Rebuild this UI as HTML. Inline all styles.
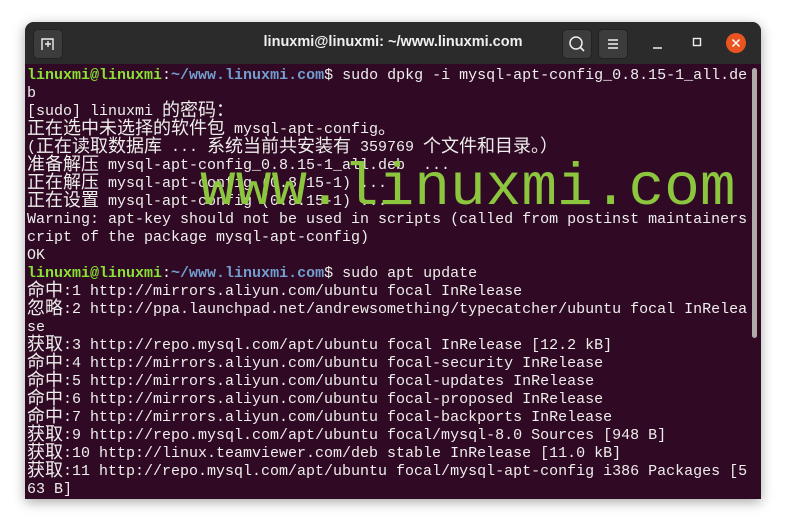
<!DOCTYPE html>
<html><head><meta charset="utf-8"><style>
html,body{margin:0;padding:0;background:#fff;width:786px;height:527px;overflow:hidden}
.win{position:absolute;left:25px;top:22px;width:736px;height:477px;border-radius:9px 9px 0 0;background:#300a24;overflow:hidden;box-shadow:0 3px 12px rgba(0,0,0,.35)}
.tb{position:absolute;left:0;top:0;width:736px;height:42px;background:#2b2b2b;color:#f0f0f0;font:bold 14.5px "Liberation Sans",sans-serif}
.btn{position:absolute;top:7px;width:28px;height:28px;border-radius:5px;background:#3c3c3c;border:1px solid #222}
.title{position:absolute;left:0;right:0;top:12px;text-align:center}
.term{position:absolute;left:2px;top:45px;font-family:"Liberation Mono","Noto Sans CJK SC",monospace;font-size:15px;line-height:18px;color:#eeeeec;white-space:pre}
.c{font-family:"Noto Sans CJK SC",sans-serif;font-size:18px;line-height:0;position:relative;top:1px}
.g{color:#8ae234;font-weight:bold}.b{color:#729fcf;font-weight:bold}
.wm{position:absolute;left:175px;top:132px;font-family:"Liberation Mono",monospace;font-size:59.5px;color:#8cc63f;white-space:pre}
.sb{position:absolute;left:727px;top:46px;width:5px;height:270px;border-radius:3px;background:#b0aaad}
</style></head><body>
<div class="win">
<div class="tb">
<div class="btn" style="left:8px"><svg width="28" height="28" viewBox="0 0 28 28"><path d="M8 20V9h11v11M14 11v6M11 14h6" stroke="#eee" stroke-width="1.4" fill="none"/></svg></div>
<div class="title">linuxmi@linuxmi: ~/www.linuxmi.com</div>
<div class="btn" style="left:537px"><svg width="28" height="28" viewBox="0 0 28 28"><circle cx="13" cy="13" r="6" stroke="#eee" stroke-width="1.5" fill="none"/><path d="M17.5 17.5L21 21" stroke="#eee" stroke-width="1.6"/></svg></div>
<div class="btn" style="left:573px"><svg width="28" height="28" viewBox="0 0 28 28"><path d="M9 10h10M9 14h10M9 18h10" stroke="#eee" stroke-width="1.4"/></svg></div>
<svg style="position:absolute;left:626px;top:14px" width="14" height="14"><path d="M2 12h9" stroke="#eee" stroke-width="1.5"/></svg>
<svg style="position:absolute;left:666px;top:14px" width="14" height="14"><rect x="2.5" y="2.5" width="7" height="7" stroke="#eee" stroke-width="1.4" fill="none"/></svg>
<svg style="position:absolute;left:701px;top:11px" width="20" height="20"><circle cx="10" cy="10" r="10" fill="#e95420"/><path d="M6.5 6.5l7 7M13.5 6.5l-7 7" stroke="#fff" stroke-width="1.5"/></svg>
</div>
<div class="term"><span class="g">linuxmi@linuxmi</span>:<span class="b">~/www.linuxmi.com</span>$ sudo dpkg -i mysql-apt-config_0.8.15-1_all.de
b
[sudo] linuxmi <span class="c">的密码：</span>
<span class="c">正在选中未选择的软件包</span> mysql-apt-config<span class="c">。</span>
(<span class="c">正在读取数据库</span> ... <span class="c">系统当前共安装有</span> 359769 <span class="c">个文件和目录。）</span>
<span class="c">准备解压</span> mysql-apt-config_0.8.15-1_all.deb  ...
<span class="c">正在解压</span> mysql-apt-config (0.8.15-1) ...
<span class="c">正在设置</span> mysql-apt-config (0.8.15-1) ...
Warning: apt-key should not be used in scripts (called from postinst maintainers
cript of the package mysql-apt-config)
OK
<span class="g">linuxmi@linuxmi</span>:<span class="b">~/www.linuxmi.com</span>$ sudo apt update
<span class="c">命中</span>:1 http://mirrors.aliyun.com/ubuntu focal InRelease
<span class="c">忽略</span>:2 http://ppa.launchpad.net/andrewsomething/typecatcher/ubuntu focal InRelea
se
<span class="c">获取</span>:3 http://repo.mysql.com/apt/ubuntu focal InRelease [12.2 kB]
<span class="c">命中</span>:4 http://mirrors.aliyun.com/ubuntu focal-security InRelease
<span class="c">命中</span>:5 http://mirrors.aliyun.com/ubuntu focal-updates InRelease
<span class="c">命中</span>:6 http://mirrors.aliyun.com/ubuntu focal-proposed InRelease
<span class="c">命中</span>:7 http://mirrors.aliyun.com/ubuntu focal-backports InRelease
<span class="c">获取</span>:9 http://repo.mysql.com/apt/ubuntu focal/mysql-8.0 Sources [948 B]
<span class="c">获取</span>:10 http://linux.teamviewer.com/deb stable InRelease [11.0 kB]
<span class="c">获取</span>:11 http://repo.mysql.com/apt/ubuntu focal/mysql-apt-config i386 Packages [5
63 B]</div>
<div class="wm">www.linuxmi.com</div>
<div class="sb"></div>
</div>
</body></html>
